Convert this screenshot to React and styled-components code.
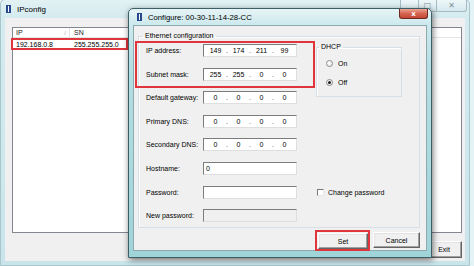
import React from "react";
import styled, { createGlobalStyle } from "styled-components";

const GlobalStyle = createGlobalStyle`
  html, body { margin: 0; padding: 0; }
  body {
    width: 474px;
    height: 266px;
    overflow: hidden;
    font-family: "Liberation Sans", Arial, sans-serif;
    color: #000;
  }
`;

const Desktop = styled.div`
  position: relative;
  width: 474px;
  height: 266px;
  overflow: hidden;
  background: #e4f3f5;
`;

// windows sit on a free desktop canvas, so they are placed by coordinates
const Window = styled.div`
  position: absolute;
  left: ${p => p.$left}px;
  top: ${p => p.$top}px;
  width: ${p => p.$width}px;
  height: ${p => p.$height}px;
  box-sizing: border-box;
  display: flex;
  flex-direction: column;
  border: 1px solid ${p => (p.$active ? "#3e5e66" : "#a9c6cd")};
  border-radius: 5px 5px 0 0;
  background: ${p =>
    p.$active
      ? "linear-gradient(180deg, #e6f4f6 0px, #cce9ed 16px, #b4dee3 60px, #9fd4d9 100%)"
      : "linear-gradient(180deg, #e2f1f4 0px, #d4ebf0 18px, #c9e5eb 100%)"};
  box-shadow: ${p => (p.$active ? "1px 2px 6px rgba(0, 0, 0, 0.55)" : "none")};
`;

const TitleBar = styled.div`
  display: flex;
  align-items: center;
  height: ${p => p.$height}px;
  flex: 0 0 auto;
  padding: ${p => p.$pad};
  box-sizing: border-box;
`;

const TitleText = styled.span`
  font-size: ${p => p.$size}px;
  margin-left: 6px;
  white-space: nowrap;
`;

const AppIcon = () => (
  <svg width="5" height="8" viewBox="0 0 5 8">
    <rect x="0" y="0" width="5" height="8" fill="#27488f" />
    <rect x="2" y="1" width="1" height="6" fill="#ffffff" />
  </svg>
);

const CaptionGroup = styled.div`
  display: flex;
  margin-left: auto;
  align-self: flex-start;
  border: 1px solid #a7bcc2;
  border-top: none;
  border-radius: 0 0 3px 3px;
  background: linear-gradient(180deg, #eef7f9, #d6e9ee);
`;

const CaptionButton = styled.div`
  width: ${p => p.$width}px;
  height: 11px;
  display: flex;
  align-items: center;
  justify-content: center;
  color: #7d9096;
  font-size: 8px;
  font-family: "DejaVu Sans", sans-serif;
  & + & { border-left: 1px solid #a7bcc2; }
`;

const CloseButton = styled.div`
  margin-left: auto;
  align-self: flex-start;
  width: 29px;
  height: 10px;
  display: flex;
  align-items: center;
  justify-content: center;
  box-sizing: border-box;
  border: 1px solid #6e2a22;
  border-top: none;
  border-radius: 0 0 3px 3px;
  background: linear-gradient(180deg, #eaa595 0%, #d66652 50%, #c24631 100%);
  color: #fff;
  font-family: "DejaVu Sans", sans-serif;
  font-weight: bold;
  font-size: 7px;
`;

const Client = styled.div`
  flex: 1;
  display: flex;
  flex-direction: column;
  margin: ${p => p.$margin};
  padding: ${p => p.$pad};
  gap: ${p => p.$gap || 0}px;
  background: #f0f0f0;
  border: ${p => (p.$framed ? "1px solid #8fa9b0" : "none")};
  min-height: 0;
`;

/* ----- list view of the back window ----- */

const ListView = styled.div`
  height: 206px;
  flex: 0 0 auto;
  box-sizing: border-box;
  border: 1px solid #828790;
  background: #fff;
  font-size: 7px;
`;

const ListHeader = styled.div`
  display: flex;
  height: 10px;
  box-sizing: border-box;
  border-bottom: 1px solid #e5e5e5;
`;

const HeaderCell = styled.div`
  width: ${p => p.$width}px;
  box-sizing: border-box;
  display: flex;
  align-items: center;
  justify-content: space-between;
  padding: 0 3px 0 ${p => p.$pad}px;
  border-right: 1px solid #e5e5e5;
  color: #222;
`;

const SortMark = styled.span`
  color: #a8a8a8;
  font-size: 6px;
`;

const ListRow = styled.div`
  display: flex;
  align-items: center;
  width: 117px;
  height: 12px;
  box-sizing: border-box;
  margin-left: -2px;
  border: 2px solid ${p => (p.$marked ? "#e0353b" : "transparent")};
`;

const ListCell = styled.div`
  width: ${p => p.$width}px;
  box-sizing: border-box;
  padding-left: ${p => p.$pad}px;
  white-space: nowrap;
`;

const BackFooter = styled.div`
  display: flex;
  justify-content: flex-end;
  padding-top: 8px;
`;

const PushButton = styled.div`
  width: ${p => p.$width}px;
  height: ${p => p.$height || 16}px;
  margin-top: ${p => p.$top || 0}px;
  box-sizing: border-box;
  display: flex;
  align-items: center;
  justify-content: center;
  font-size: 7px;
  background: #f0f0f0;
  border: 1px solid;
  border-color: #ffffff #646464 #646464 #ffffff;
  box-shadow: inset -1px -1px 0 #a0a0a0, inset 1px 1px 0 #e3e3e3;
`;

/* ----- dialog content ----- */

const GroupBox = styled.fieldset`
  margin: 0;
  min-width: 0;
  box-sizing: border-box;
  border: 1px solid #d5dfe5;
  box-shadow: inset 1px 1px 0 #fff;
  padding: ${p => p.$pad};
  flex: ${p => (p.$grow ? 1 : "0 0 auto")};
  height: ${p => (p.$height ? `${p.$height}px` : "auto")};
  margin-top: ${p => p.$top || 0}px;
  display: flex;
  flex-direction: column;
`;

const Legend = styled.legend`
  font-size: 7px;
  line-height: 10px;
  padding: 0 2px;
  margin-left: ${p => p.$indent}px;
`;

const GroupBody = styled.div`
  display: flex;
  gap: 19px;
`;

const FieldColumn = styled.div`
  width: 151px;
  display: flex;
  flex-direction: column;
  gap: 10.6px;
`;

const MarkFrame = styled.div`
  display: flex;
  flex-direction: column;
  gap: 10.6px;
  margin: -3px -18px -7.4px -11px;
  padding: 1px 16px 5.4px 9px;
  border: 2px solid #e0353b;
`;

const FieldRow = styled.div`
  display: flex;
  align-items: center;
  height: 13px;
`;

const FieldLabel = styled.span`
  width: 57px;
  font-size: 7px;
  white-space: nowrap;
`;

const TextBox = styled.div`
  width: 94px;
  height: 13px;
  box-sizing: border-box;
  border: 1px solid;
  border-color: #7c7c7c #dedede #dedede #7c7c7c;
  background: ${p => (p.$disabled ? "#f0f0f0" : "#fff")};
  font-size: 7px;
  display: flex;
  align-items: center;
  padding-left: 2px;
`;

const IpBox = styled(TextBox)`
  display: grid;
  grid-template-columns: 1fr 0 1fr 0 1fr 0 1fr;
  padding-left: 0;
`;

const Octet = styled.span`
  text-align: center;
`;

const Dot = styled.span`
  display: flex;
  justify-content: center;
  width: 0;
  overflow: visible;
  color: #444;
`;

const SideColumn = styled.div`
  width: 86px;
  display: flex;
  flex-direction: column;
`;

const OptionRow = styled.div`
  display: flex;
  align-items: center;
  height: 10px;
  gap: 5px;
  font-size: 7px;
  margin-top: ${p => p.$top}px;
`;

const Radio = styled.span`
  width: 7px;
  height: 7px;
  box-sizing: border-box;
  border-radius: 50%;
  border: 1px solid #8c8c8c;
  background: radial-gradient(circle at 35% 35%, #fff, #e6e6e6);
  display: flex;
  align-items: center;
  justify-content: center;
  &::after {
    content: "";
    width: 3px;
    height: 3px;
    border-radius: 50%;
    background: ${p => (p.$checked ? "#1b1b1b" : "transparent")};
  }
`;

const CheckRow = styled.div`
  display: flex;
  align-items: center;
  gap: 4px;
  height: 13px;
  margin-top: auto;
  margin-bottom: 23.6px;
  padding-left: 1px;
  font-size: 7px;
  white-space: nowrap;
`;

const CheckBox = styled.span`
  width: 7px;
  height: 7px;
  box-sizing: border-box;
  border: 1px solid;
  border-color: #7a7a7a #e8e8e8 #e8e8e8 #7a7a7a;
  background: #fff;
`;

const DialogFooter = styled.div`
  height: 20px;
  flex: 0 0 auto;
  display: flex;
  justify-content: flex-end;
  align-items: flex-start;
  gap: 3px;
`;

const MarkedButton = styled.div`
  border: 2px solid #e0353b;
  padding: 1px 0 0 1px;
`;

function IpField({ value }) {
  const parts = value.split(".");
  return (
    <IpBox>
      {parts.map((p, i) => (
        <React.Fragment key={i}>
          {i > 0 && <Dot>.</Dot>}
          <Octet>{p}</Octet>
        </React.Fragment>
      ))}
    </IpBox>
  );
}

const extraFields = [
  { label: "Default gateway:", ip: "0.0.0.0" },
  { label: "Primary DNS:", ip: "0.0.0.0" },
  { label: "Secondary DNS:", ip: "0.0.0.0" },
  { label: "Hostname:", text: "0" },
  { label: "Password:", text: "" },
  { label: "New password:", text: "", disabled: true },
];

export default function App() {
  return (
    <Desktop>
      <GlobalStyle />

      <Window $left={0} $top={-1} $width={470} $height={267}>
        <TitleBar $height={18} $pad="0 2px 0 5px">
          <AppIcon />
          <TitleText $size={8}>IPconfig</TitleText>
          <CaptionGroup>
            <CaptionButton $width={17}>_</CaptionButton>
            <CaptionButton $width={17}>□</CaptionButton>
            <CaptionButton $width={29}>✕</CaptionButton>
          </CaptionGroup>
        </TitleBar>
        <Client $margin="0 4px 4px 4px" $pad="9px 3px 3px 7px">
          <ListView>
            <ListHeader>
              <HeaderCell $width={57} $pad={3}>
                IP <SortMark>/</SortMark>
              </HeaderCell>
              <HeaderCell $width={60} $pad={4}>SN</HeaderCell>
            </ListHeader>
            <ListRow $marked>
              <ListCell $width={57} $pad={3}>192.168.0.8</ListCell>
              <ListCell $width={56} $pad={4}>255.255.255.0</ListCell>
            </ListRow>
          </ListView>
          <BackFooter>
            <PushButton $width={36} $height={17}>Exit</PushButton>
          </BackFooter>
        </Client>
      </Window>

      <Window $left={128} $top={8} $width={304} $height={250} $active>
        <TitleBar $height={16} $pad="0 3px 0 8px">
          <AppIcon />
          <TitleText $size={7.7}>Configure: 00-30-11-14-28-CC</TitleText>
          <CloseButton>x</CloseButton>
        </TitleBar>
        <Client $margin="0 4px 6px 4px" $pad="5px 6px 0 4px" $gap={2} $framed>
          <GroupBox $grow $pad="3px 7px 5px 7px">
            <Legend $indent={-3}>Ethernet configuration</Legend>
            <GroupBody>
              <FieldColumn>
                <MarkFrame>
                  <FieldRow>
                    <FieldLabel>IP address:</FieldLabel>
                    <IpField value="149.174.211.99" />
                  </FieldRow>
                  <FieldRow>
                    <FieldLabel>Subnet mask:</FieldLabel>
                    <IpField value="255.255.0.0" />
                  </FieldRow>
                </MarkFrame>
                {extraFields.map(f => (
                  <FieldRow key={f.label}>
                    <FieldLabel>{f.label}</FieldLabel>
                    {f.ip ? (
                      <IpField value={f.ip} />
                    ) : (
                      <TextBox $disabled={f.disabled}>{f.text}</TextBox>
                    )}
                  </FieldRow>
                ))}
              </FieldColumn>
              <SideColumn>
                <GroupBox $height={55} $top={-2} $pad="0 4px 0 9px">
                  <Legend $indent={-7}>DHCP</Legend>
                  <OptionRow $top={6}>
                    <Radio />
                    On
                  </OptionRow>
                  <OptionRow $top={9}>
                    <Radio $checked />
                    Off
                  </OptionRow>
                </GroupBox>
                <CheckRow>
                  <CheckBox />
                  Change password
                </CheckRow>
              </SideColumn>
            </GroupBody>
          </GroupBox>
          <DialogFooter>
            <MarkedButton>
              <PushButton $width={50}>Set</PushButton>
            </MarkedButton>
            <PushButton $width={47} $top={2}>Cancel</PushButton>
          </DialogFooter>
        </Client>
      </Window>
    </Desktop>
  );
}
